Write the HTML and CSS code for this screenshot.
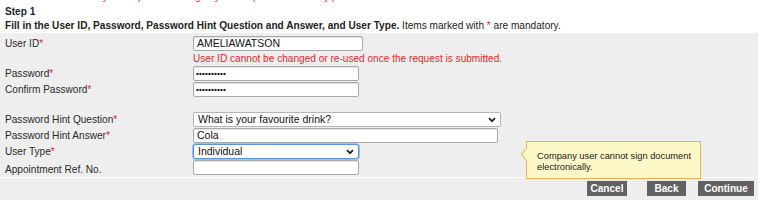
FILE: index.html
```html
<!DOCTYPE html>
<html>
<head>
<meta charset="utf-8">
<link rel="stylesheet" href="styles.css">
</head>
<body>
<div class="page">
  <p class="notice">Please note that it may take up to 1 working day to complete the security process.</p>
  <h2 class="step">Step 1</h2>
  <p class="intro"><b>Fill in the User ID, Password, Password Hint Question and Answer, and User Type.</b> Items marked with <span class="req">*</span> are mandatory.</p>
  <div class="panel">
    <div class="form">
      <div class="row">
        <label class="lbl">User ID<span class="req">*</span></label>
        <input class="field w170" type="text" value="AMELIAWATSON">
      </div>
      <div class="row msg">
        <span class="lbl"></span>
        <span class="error">User ID cannot be changed or re-used once the request is submitted.</span>
      </div>
      <div class="row">
        <label class="lbl">Password<span class="req">*</span></label>
        <input class="field w166 dots" type="text" value="••••••••••">
      </div>
      <div class="row">
        <label class="lbl">Confirm Password<span class="req">*</span></label>
        <input class="field w166 dots" type="text" value="••••••••••">
      </div>
      <div class="spacer"></div>
      <div class="row">
        <label class="lbl">Password Hint Question<span class="req">*</span></label>
        <div class="sel w308">
          <select class="field"><option>What is your favourite drink?</option></select>
          <svg class="chev" width="8" height="6" viewBox="0 0 8 6"><path d="M1 1.2 L4 4.2 L7 1.2" fill="none" stroke="#222" stroke-width="1.8"/></svg>
        </div>
      </div>
      <div class="row">
        <label class="lbl">Password Hint Answer<span class="req">*</span></label>
        <input class="field w305" type="text" value="Cola">
      </div>
      <div class="row">
        <label class="lbl">User Type<span class="req">*</span></label>
        <div class="sel w166">
          <select class="field focus"><option>Individual</option></select>
          <svg class="chev" width="8" height="6" viewBox="0 0 8 6"><path d="M1 1.2 L4 4.2 L7 1.2" fill="none" stroke="#222" stroke-width="1.8"/></svg>
        </div>
      </div>
      <div class="row last">
        <label class="lbl">Appointment Ref. No.</label>
        <input class="field w166" type="text" value="">
      </div>
    </div>
    <div class="actions">
      <button class="btn b-cancel">Cancel</button>
      <button class="btn b-back">Back</button>
      <button class="btn b-continue">Continue</button>
    </div>
    <div class="tip">Company user cannot sign document<br>electronically.</div>
  </div>
</div>
</body>
</html>
```
FILE: styles.css
```css
* { box-sizing: border-box; }
html, body { margin: 0; padding: 0; background: #fff; }
body {
  font-family: "Liberation Sans", Arial, sans-serif;
  font-size: 10.1px;
  color: #222;
  overflow: hidden;
  height: 205px;
}
.page { width: 768px; }
.notice {
  margin: -9px 0 0 5px;
  height: 12px;
  line-height: 12px;
  color: #e8262c;
  font-size: 10.1px;
}
.step {
  margin: 0 0 0 5px;
  font-size: 10.1px;
  line-height: 12px;
  height: 12px;
  padding-top: 3px;
  box-sizing: content-box;
}
.intro {
  margin: 0 0 1px 5px;
  line-height: 12px;
  height: 12px;
  padding-top: 2px;
  box-sizing: content-box;
}
.req { color: #e8262c; }
.panel {
  position: relative;
  width: 758px;
  background: #eeeeee;
  padding-top: 2px;
}
.form { padding-left: 5px; padding-bottom: 1px; border-bottom: 1px solid #fff; }
.row {
  display: flex;
  align-items: center;
  height: 16px;
}
.row.msg { height: 14px; }
.row.last { height: 17px; align-items: flex-end; padding-bottom: 1px; }
.spacer { height: 14px; }
.lbl { width: 188px; flex: none; color: #2a2a2a; }
.error { color: #e8262c; }
.field {
  height: 15px;
  margin: 0;
  padding: 0 3px;
  border: 1px solid #a9a9a9;
  border-radius: 2px;
  background: #fff;
  font-family: "Liberation Sans", Arial, sans-serif;
  font-size: 10.5px;
  color: #111;
  box-shadow: inset 0 1px 1px rgba(0,0,0,0.12);
  outline: none;
}
.w170 { width: 170px; }
.w166 { width: 166px; }
.w305 { width: 305px; }
.w308 { width: 308px; }
.dots { font-size: 8px; letter-spacing: 0.2px; font-weight: bold; padding-left: 2px; }
.sel { position: relative; height: 15px; }
.sel select {
  -webkit-appearance: none;
  appearance: none;
  width: 100%;
  padding: 0 14px 0 4px;
  line-height: 13px;
  box-shadow: none;
  border-color: #b5b5b5;
}
.sel select.focus {
  border: 1px solid #5d93d8;
  box-shadow: 0 0 0 1px #9dbfeb;
  border-radius: 3px;
}
.chev { position: absolute; right: 5px; top: 5px; }
.actions {
  display: flex;
  justify-content: flex-end;
  align-items: flex-start;
  height: 22px;
  padding: 3px 4px 0 0;
}
.btn {
  height: 15px;
  margin: 0;
  padding: 0;
  border: 0;
  background: #626262;
  color: #fff;
  font-family: "Liberation Sans", Arial, sans-serif;
  font-weight: bold;
  font-size: 10.1px;
  line-height: 15px;
  text-align: center;
}
.b-cancel { width: 40px; margin-right: 20px; }
.b-back { width: 39px; margin-right: 12px; }
.b-continue { width: 56px; }
.tip {
  position: absolute;
  left: 526px;
  top: 108px;
  width: 175px;
  height: 38px;
  padding: 9px 2px 0 10px;
  background: #fcf7c6;
  border: 1px solid #e6b64e;
  font-size: 9.3px;
  line-height: 11px;
  color: #222;
  white-space: nowrap;
}
.tip::before {
  content: "";
  position: absolute;
  left: -5px;
  top: 8px;
  width: 8px;
  height: 8px;
  background: #fcf7c6;
  border-left: 1px solid #e6b64e;
  border-bottom: 1px solid #e6b64e;
  transform: rotate(45deg) skew(8deg, 8deg);
}
```
